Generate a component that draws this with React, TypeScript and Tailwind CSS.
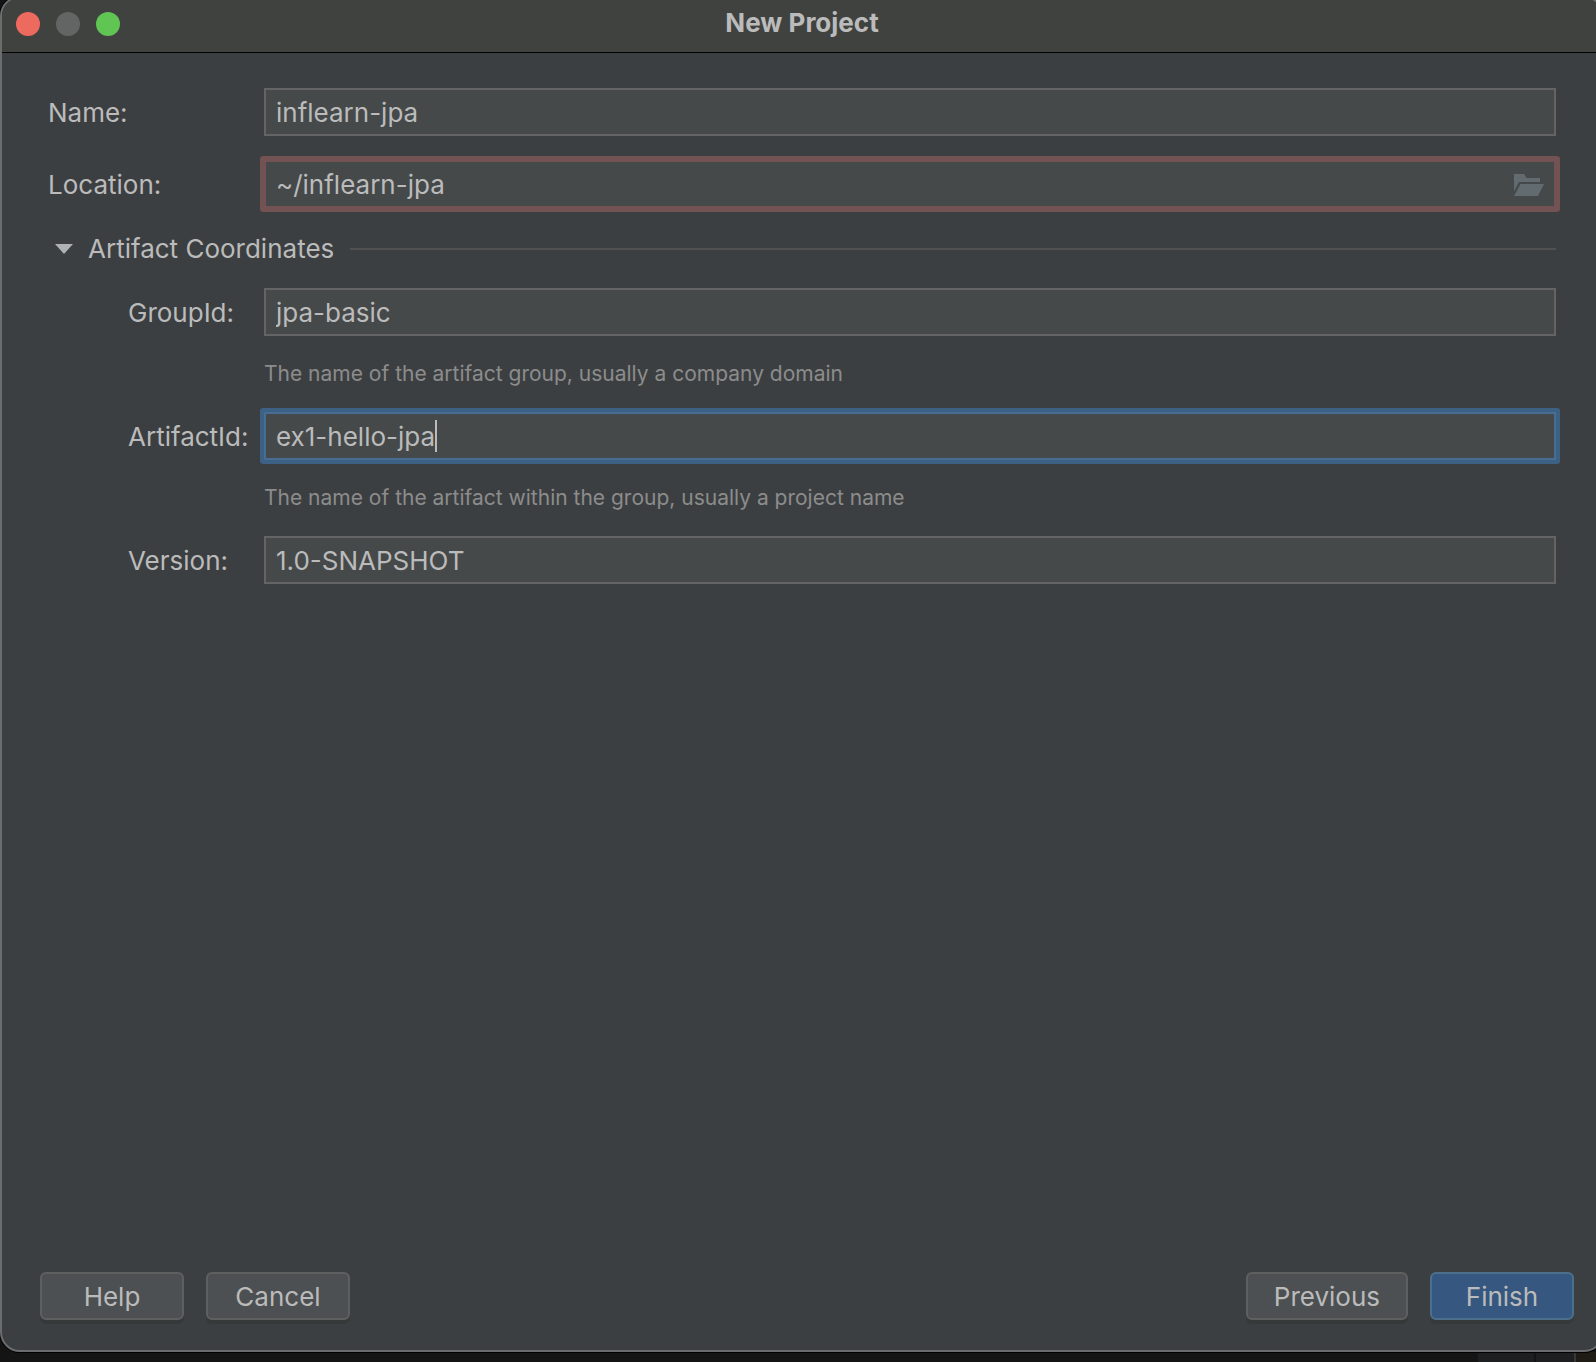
import { useState } from 'react';
import type { ReactNode } from 'react';
import clsx from 'clsx';

type FieldStatus = 'default' | 'error' | 'focused';

interface FieldRowProps {
  id: string;
  label: string;
  value: string;
  onChange: (value: string) => void;
  status?: FieldStatus;
  hint?: string;
  indented?: boolean;
  children?: ReactNode;
}

function FieldRow({
  id,
  label,
  value,
  onChange,
  status = 'default',
  hint,
  indented = false,
  children,
}: FieldRowProps) {
  return (
    <div>
      <div className="flex items-center">
        <label
          htmlFor={id}
          className={clsx('w-[216px] shrink-0 pt-0.5 whitespace-nowrap', indented && 'pl-20')}
        >
          {label}
        </label>
        <div
          className={clsx(
            'flex h-12 min-w-0 flex-1 cursor-text items-center border-2 bg-[#45494a] px-2.5',
            status === 'default' && 'border-[#646464]',
            status === 'error' && 'rounded-[1px] border-[#725252] ring-4 ring-[#725252]',
            status === 'focused' && 'rounded-[1px] border-[#466d94] ring-4 ring-[#3d6185]'
          )}
        >
          <input
            id={id}
            type="text"
            value={value}
            onChange={e => onChange(e.target.value)}
            aria-invalid={status === 'error'}
            aria-describedby={hint ? `${id}-hint` : undefined}
            spellCheck={false}
            className={clsx(
              'min-w-0 bg-transparent pt-0.5 outline-none',
              status === 'focused' ? '[field-sizing:content] caret-transparent' : 'flex-1'
            )}
          />
          {status === 'focused' && <span className="h-8 w-0.5 bg-[#bbbbbb]" />}
          {children}
        </div>
      </div>
      {hint && (
        <p
          id={`${id}-hint`}
          className="flex h-[76px] items-center pl-[216px] text-[21px] text-[#8c8c8c]"
        >
          {hint}
        </p>
      )}
    </div>
  );
}

function FolderIcon() {
  return (
    <svg viewBox="0 0 30 22" className="h-[22px] w-[30px]" fill="#616b70" aria-hidden="true">
      <path d="M0 0h10l2.500 4H26v4H5L0 17.500z" />
      <path d="M6.500 10H30l-6 12H0z" />
    </svg>
  );
}

function DialogButton({ children, primary = false }: { children: ReactNode; primary?: boolean }) {
  return (
    <button
      type="button"
      className={clsx(
        'h-12 min-w-36 rounded-md border-2 px-[26px] pt-0.5 shadow-[0_4px_0_#36393a]',
        primary ? 'border-[#4c708c] bg-[#365880]' : 'border-[#5e6060] bg-[#4c5052]'
      )}
    >
      {children}
    </button>
  );
}

export default function App() {
  const [name, setName] = useState('inflearn-jpa');
  const [location, setLocation] = useState('~/inflearn-jpa');
  const [groupId, setGroupId] = useState('jpa-basic');
  const [artifactId, setArtifactId] = useState('ex1-hello-jpa');
  const [version, setVersion] = useState('1.0-SNAPSHOT');
  const [expanded, setExpanded] = useState(true);

  return (
    <div className="flex min-h-screen flex-col overflow-hidden bg-[#141414] font-['Inter',sans-serif] text-[26px] leading-8 text-[#bbbbbb]">
      {/* Dialog window, its top and right edges run past the screen */}
      <div className="relative -mt-1 -mr-2 flex flex-1 flex-col overflow-hidden rounded-[20px] border-2 border-[#6a6c6d] bg-[#3c3f41] shadow-[0_0_0_1px_#000000]">
        {/* Title bar */}
        <header className="flex h-[55px] items-center border-b border-black bg-[#404240] px-3.5 pb-0.5">
          <div className="flex gap-4">
            <button type="button" aria-label="Close" className="size-6 rounded-full bg-[#ed6a5e]" />
            <button type="button" aria-label="Minimize" className="size-6 rounded-full bg-[#636564]" />
            <button type="button" aria-label="Zoom" className="size-6 rounded-full bg-[#61c554]" />
          </div>
          <h1 className="flex-1 pr-[104px] pb-0.5 text-center font-bold">New Project</h1>
        </header>

        {/* Project form */}
        <main className="flex-1 px-[46px] pt-[35px]">
          <div className="flex flex-col gap-6">
            <FieldRow id="name" label="Name:" value={name} onChange={setName} />
            <FieldRow
              id="location"
              label="Location:"
              value={location}
              onChange={setLocation}
              status="error"
            >
              <button type="button" aria-label="Browse" className="pt-0.5">
                <FolderIcon />
              </button>
            </FieldRow>
          </div>

          <div className="flex h-20 items-center gap-4 pt-0.5">
            <button
              type="button"
              aria-expanded={expanded}
              onClick={() => setExpanded(!expanded)}
              className="flex items-center gap-[15px] pl-[7px]"
            >
              <svg
                viewBox="0 0 18 10"
                className={clsx('h-2.5 w-[18px]', !expanded && '-rotate-90')}
                fill="#afb1b3"
                aria-hidden="true"
              >
                <path d="M0 0h18L9 10z" />
              </svg>
              Artifact Coordinates
            </button>
            <div className="h-0.5 flex-1 bg-[#515151]" />
          </div>

          {expanded && (
            <div>
              <FieldRow
                id="group-id"
                label="GroupId:"
                value={groupId}
                onChange={setGroupId}
                hint="The name of the artifact group, usually a company domain"
                indented
              />
              <FieldRow
                id="artifact-id"
                label="ArtifactId:"
                value={artifactId}
                onChange={setArtifactId}
                status="focused"
                hint="The name of the artifact within the group, usually a project name"
                indented
              />
              <FieldRow
                id="version"
                label="Version:"
                value={version}
                onChange={setVersion}
                indented
              />
            </div>
          )}
        </main>

        {/* Actions */}
        <footer className="flex justify-between pr-7 pb-[30px] pl-[38px]">
          <div className="flex gap-[22px]">
            <DialogButton>Help</DialogButton>
            <DialogButton>Cancel</DialogButton>
          </div>
          <div className="flex gap-[22px]">
            <DialogButton>Previous</DialogButton>
            <DialogButton primary>Finish</DialogButton>
          </div>
        </footer>
      </div>

      {/* Desktop showing below the window */}
      <div className="flex h-2.5 justify-end">
        <div className="w-14 bg-[#1e1f21]" />
        <div className="ml-0.5 w-[38px] bg-[#1e1f21]" />
        <div className="w-0.5 bg-[#37383a]" />
        <div className="w-5 bg-[#1f1c15]" />
      </div>
    </div>
  );
}
